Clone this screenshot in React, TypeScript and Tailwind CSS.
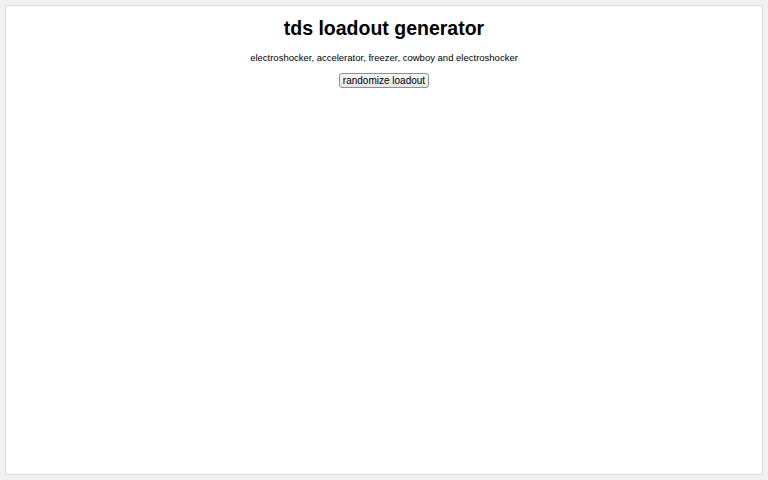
import { useState } from "react";

const towers = ["electroshocker", "accelerator", "freezer", "cowboy", "electroshocker"];

export default function App() {
  const [loadout] = useState(towers);
  const text = loadout.slice(0, -1).join(", ") + " and " + loadout[loadout.length - 1];

  return (
    <div className="h-[480px] bg-[#f2f2f2] p-[5px] font-['Liberation_Sans',Arial,sans-serif] text-black">
      <div className="h-full border border-[#dcdcdc] bg-white flex flex-col items-center">
        <h1 className="mt-[9px] text-[19.5px] font-bold leading-[26px]">tds loadout generator</h1>
        <p className="mt-[11px] text-[9.5px] leading-[12px]">{text}</p>
        <button className="mt-[9px] h-[15px] px-[3px] text-[10px] leading-[12px] border border-[#909090] rounded-[3px] bg-gradient-to-b from-[#f6f6f6] to-[#e6e6e6]">
          randomize loadout
        </button>
      </div>
    </div>
  );
}
